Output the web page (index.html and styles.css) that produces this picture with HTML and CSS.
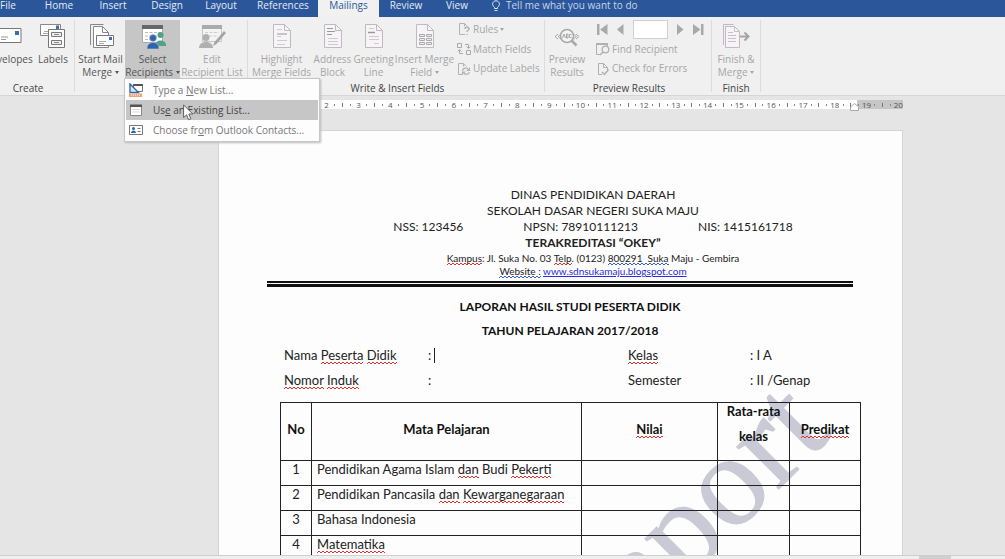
FILE: index.html
```html
<!DOCTYPE html>
<html lang="id">
<head>
<meta charset="utf-8">
<title>Laporan Hasil Studi</title>
<link rel="stylesheet" href="styles.css">
</head>
<body>
<nav class="tabs">
  <button class="tab tab-file">File</button>
  <button class="tab">Home</button>
  <button class="tab">Insert</button>
  <button class="tab">Design</button>
  <button class="tab">Layout</button>
  <button class="tab tab-wide">References</button>
  <button class="tab tab-active">Mailings</button>
  <button class="tab">Review</button>
  <button class="tab tab-view">View</button>
  <button class="tell">
    <svg width="10" height="12" viewBox="0 0 10 12" fill="none" stroke="#dbe6f6"><path d="M3.5 8.5V7.3C.2 5 1.500.8 5 .8S9.800 5 6.500 7.300V8.500ZM3.500 10.500h3"/></svg>
    Tell me what you want to do
  </button>
</nav>

<header class="ribbon">
  <section class="group group-create">
    <div class="tools">
      <button class="big big-env">
        <svg width="26" height="26" viewBox="0 0 26 26"><path d="M1 5.500h24v14H1z" fill="#fff" stroke="#777"/><path d="M19 8h4v4h-4z" fill="#3a6fb5"/><path d="M5 14h7M5 16.500h5" stroke="#999"/></svg>
        <span>Envelopes</span>
      </button>
      <button class="big big-labels">
        <svg width="26" height="26" viewBox="0 0 26 26"><path d="M.5 1.500h20v11H.5z" fill="#fff" stroke="#888"/><path d="M16 2.500h3v4h-3z" fill="#3a6fb5"/><path d="M4 8.500h4M3 10.500h5" stroke="#aaa"/><path d="M8.500 6.500h16v18h-16z" fill="#fff" stroke="#777"/><path d="M11.500 9.500h10v4h-10zM11.500 17.500h10v4h-10z" fill="#eee" stroke="#777"/><path d="M14 11.500h5M14 19.500h5" stroke="#888"/></svg>
        <span>Labels</span>
      </button>
    </div>
    <h2>Create</h2>
  </section>

  <section class="group group-start" aria-label="Start Mail Merge">
    <div class="tools">
      <button class="big big-start">
        <svg width="26" height="26" viewBox="0 0 26 26"><path d="M2.500 22V1.500h13" fill="none" stroke="#888"/><path d="M5.500 3.500h9l6 6v15h-15z" fill="#fff" stroke="#888"/><path d="M14.500 3.500v6h6" fill="none" stroke="#888"/><path d="M8.500 12.500h17v10h-17z" fill="#fff" stroke="#777"/><path d="M21 14h3v3h-3z" fill="#3a6fb5"/><path d="M11 18.500h7M11 20.500h5" stroke="#aaa"/></svg>
        <span>Start Mail<br>Merge <i class="caret"></i></span>
      </button>
      <div class="dropdown">
        <button class="big big-select" aria-expanded="true">
          <svg width="26" height="26" viewBox="0 0 26 26"><path d="M2.500 3.500h20v16h-20z" fill="#fff" stroke="#aaa"/><path d="M2 2h21v4H2z" fill="#666"/><path d="M5 9.500h15M5 13h15M5 16.500h6" stroke="#bbb" stroke-dasharray="3 1.500"/><g fill="#4fa287"><circle cx="20.500" cy="12" r="3"/><path d="M15 22c0-6 11-6 11 0v1H15z"/></g><g fill="#2f65b0" stroke="#c5c5c5" stroke-width=".6"><circle cx="13" cy="15" r="3.500"/><path d="M7 25c0-7.500 12-7.500 12 0v1H7z"/></g></svg>
          <span>Select<br>Recipients <i class="caret"></i></span>
        </button>
        <ul class="menu">
          <li><button>
            <svg width="14" height="14" viewBox="0 0 14 14"><path d="M4.500 1.500h9v7h-9z" fill="#fff" stroke="#777"/><path d="M4 1h10v2H4z" fill="#555"/><path d="M1 1v8.500h8.500z" fill="#dce9f7" stroke="#2f65b0" stroke-width="1.400"/><path d="M0 10.500h13V14H0z" fill="#e8a67c"/><path d="M2 12h9" stroke="#fff" stroke-dasharray="1 1"/></svg>
            <span>Type a <u>N</u>ew List...</span></button></li>
          <li class="hot"><button>
            <svg width="14" height="14" viewBox="0 0 14 14"><path d="M1.500 2.500h11v10h-11z" fill="#fff" stroke="#888"/><path d="M1 1.500h12v2.500H1z" fill="#555"/><path d="M3 6.500h8M3 9h8" stroke="#ddd"/></svg>
            <span>Us<u>e</u> an Existing List...</span></button></li>
          <li><button>
            <svg width="14" height="14" viewBox="0 0 14 14"><path d="M.5 2.500h13v9H.5z" fill="#fff" stroke="#777"/><circle cx="4.500" cy="5.500" r="1.500" fill="#2f65b0"/><path d="M2 10c0-3.500 5-3.500 5 0z" fill="#2f65b0"/><path d="M8.500 5.500h3M8.500 8.500h3" stroke="#777"/></svg>
            <span>Choose fr<u>o</u>m Outlook Contacts...</span></button></li>
        </ul>
        <svg class="cursor" width="11" height="17" viewBox="0 0 11 17"><path d="M.6 1v12.500l3-2.700 2 4.900 2.200-.9-2-4.800h4z" fill="#fff" stroke="#555" stroke-width=".9"/></svg>
      </div>
      <button class="big big-edit" disabled>
        <svg width="27" height="26" viewBox="0 0 27 26"><path d="M3.500 3.500h19v15h-19z" fill="#f4f4f4" stroke="#c6c6c6"/><path d="M3 2h20v4H3z" fill="#aaa"/><path d="M6 9.500h14M10 13h9" stroke="#ccc" stroke-dasharray="3 1.500"/><circle cx="7" cy="14.500" r="3.500" fill="#b0b0b0"/><path d="M0 25c0-8 14-8 14 0z" fill="#b0b0b0"/><path d="m14 23 1.500-4L25 8l2 2-9.500 11z" fill="#a5a5a5"/></svg>
        <span>Edit<br>Recipient List</span>
      </button>
    </div>
  </section>

  <section class="group group-write">
    <div class="tools">
      <button class="big big-60" disabled>
        <svg width="26" height="26" viewBox="0 0 26 26"><path d="M4.500 1.500h11l6 6v17h-17z" fill="#f6f4f6" stroke="#c2b8c2"/><path d="M15.500 1.500v6h6" fill="none" stroke="#c2b8c2"/><path d="M8 6.500h5M8 13.500h4M8 17.500h10M8 21.500h8" stroke="#ccc"/><path d="M8 10h10v2H8z" fill="#c9c4c9"/></svg>
        <span>Highlight<br>Merge Fields</span>
      </button>
      <button class="big big-40" disabled>
        <svg width="26" height="26" viewBox="0 0 26 26"><path d="M4.500 1.500h11l6 6v17h-17z" fill="#f6f4f6" stroke="#c2b8c2"/><path d="M15.500 1.500v6h6" fill="none" stroke="#c2b8c2"/><path d="M7 5.500h6M7 8.500h8M7 11.500h5" stroke="#999"/><path d="M8 15.500h10M8 18.500h10M8 21.500h10" stroke="#ccc"/></svg>
        <span>Address<br>Block</span>
      </button>
      <button class="big big-40" disabled>
        <svg width="26" height="26" viewBox="0 0 26 26"><path d="M4.500 1.500h11l6 6v17h-17z" fill="#f6f4f6" stroke="#c2b8c2"/><path d="M15.500 1.500v6h6" fill="none" stroke="#c2b8c2"/><path d="M7 9.500h7" stroke="#999" stroke-width="1.500"/><path d="M8 5.500h5M8 13.500h10M8 16.500h10M13 20.500h5" stroke="#ccc"/></svg>
        <span>Greeting<br>Line</span>
      </button>
      <button class="big big-60" disabled>
        <svg width="26" height="26" viewBox="0 0 26 26"><path d="M4.500 1.500h11l6 6v17h-17z" fill="#f6f4f6" stroke="#c2b8c2"/><path d="M15.500 1.500v6h6" fill="none" stroke="#c2b8c2"/><path d="M7.500 11.500h5v2h-5zM14.500 11.500h5v2h-5zM7.500 15.500h5v2h-5zM14.500 15.500h5v2h-5zM7.500 19.500h5v2h-5zM14.500 19.500h5v2h-5z" fill="#eee" stroke="#aaa"/></svg>
        <span>Insert Merge<br>Field <i class="caret"></i></span>
      </button>
      <div class="stack">
        <button class="small" disabled><svg width="14" height="14" viewBox="0 0 14 14" fill="none" stroke="#b3b3b3"><path d="M8 12.500H2.500v-11h5l3 3M7.500 1.500v3"/><path d="M8 7c0-2.500 4-2.500 4 0 0 1.500-2 1.500-2 3M10 12v1" stroke-width="1.500"/></svg>Rules <i class="caret"></i></button>
        <button class="small" disabled><svg width="14" height="14" viewBox="0 0 14 14" fill="none" stroke="#aaa"><path d="M.5 1.500h4v4h-4zM9.500 8.500h4v4h-4zM8 2.500h3.500V6M9.500 4.500l2 2 2-2M6 11.500H2.500V8M.5 9.500l2-2 2 2"/></svg>Match Fields</button>
        <button class="small" disabled><svg width="14" height="14" viewBox="0 0 14 14" fill="none" stroke="#b3b3b3"><path d="M5 12.500H1.500v-11h5l3 3M6.500 1.500v3"/><path d="M5.500 9c.5-3.500 5-4 6-1M12.500 5.500V8.500H9.500M12.500 10c-1 3-5 3-6 .500M5.500 13v-3h3" stroke-width="1.200"/></svg>Update Labels</button>
      </div>
    </div>
    <h2>Write &amp; Insert Fields</h2>
  </section>

  <section class="group group-preview">
    <div class="tools">
      <button class="big big-prev" disabled>
        <svg width="26" height="26" viewBox="0 0 26 26" fill="none" stroke="#a8a8a8"><path d="m4 11-3 2.500L4 16M7 11l-3 2.500L7 16M22 11l3 2.500L22 16M19.500 11l3 2.500-3 2.500"/><circle cx="13" cy="13" r="6.500" fill="#f4f4f4" stroke-width="1.500"/><path d="m17.500 17.500 5 5" stroke-width="2.500"/><path d="m8.500 15 1.500-4 1.500 4M12.500 11v4h1.500v-4zM17.500 11.500h-2v3h2" stroke-width="1"/></svg>
        <span>Preview<br>Results</span>
      </button>
      <div class="stack">
        <div class="record">
          <button disabled aria-label="First"><svg width="11" height="11" viewBox="0 0 11 11" fill="#a9a9a9"><path d="M0 0h2.500v11H0zM10.500 0v11L3 5.500z"/></svg></button>
          <button disabled aria-label="Previous"><svg width="7" height="11" viewBox="0 0 7 11" fill="#a9a9a9"><path d="M6.500 0v11L0 5.500z"/></svg></button>
          <input type="text" aria-label="Record">
          <button disabled aria-label="Next"><svg width="7" height="11" viewBox="0 0 7 11" fill="#a9a9a9"><path d="M0 0v11l6.500-5.500z"/></svg></button>
          <button disabled aria-label="Last"><svg width="11" height="11" viewBox="0 0 11 11" fill="#a9a9a9"><path d="M0 0v11l7.500-5.500zM8 0h2.500v11H8z"/></svg></button>
        </div>
        <button class="small" disabled><svg width="14" height="14" viewBox="0 0 14 14" fill="none" stroke="#b0b0b0"><path d="M4 12.500H.5v-11h11V4"/><path d="M0 2h12" stroke-width="2"/><circle cx="9.500" cy="7.500" r="3.300" stroke-width="1.300"/><path d="m7 10-3 3" stroke-width="1.500"/></svg>Find Recipient</button>
        <button class="small" disabled><svg width="14" height="14" viewBox="0 0 14 14" fill="none" stroke="#b0b0b0"><path d="M6 12.500H2.500v-11h5l4 4V8M7.500 1.500v4h4"/><path d="m6 10 2.500 2.500 4-5" stroke-width="1.500"/></svg>Check for Errors</button>
      </div>
    </div>
    <h2>Preview Results</h2>
  </section>

  <section class="group group-finish">
    <div class="tools">
      <button class="big big-fin" disabled>
        <svg width="28" height="26" viewBox="0 0 28 26"><path d="M1.500 22V1.500h10" fill="none" stroke="#c2b8c2"/><path d="M3.500 3.500h9l5 5v16h-14z" fill="#f6f4f6" stroke="#c2b8c2"/><path d="M12.500 3.500v5h5M6 9.500h5M6 12.500h8M6 15.500h8M6 18.500h8" fill="none" stroke="#c8bfc8"/><path d="M18 13.500h8M22.500 9.500l4 4-4 4" fill="none" stroke="#a5a5a5" stroke-width="2"/></svg>
        <span>Finish &amp;<br>Merge <i class="caret"></i></span>
      </button>
    </div>
    <h2>Finish</h2>
  </section>
</header>

<main class="workspace">
  <div class="ruler">
    <div class="ruler-margin"></div>
    <ol class="ruler-scale">
      <li><i></i><b></b><i></i><span></span></li><li><i></i><b></b><i></i><span>2</span></li><li><i></i><b></b><i></i><span>3</span></li><li><i></i><b></b><i></i><span>4</span></li><li><i></i><b></b><i></i><span>5</span></li><li><i></i><b></b><i></i><span>6</span></li><li><i></i><b></b><i></i><span>7</span></li><li><i></i><b></b><i></i><span>8</span></li><li><i></i><b></b><i></i><span>9</span></li><li><i></i><b></b><i></i><span>10</span></li><li><i></i><b></b><i></i><span>11</span></li><li><i></i><b></b><i></i><span>12</span></li><li><i></i><b></b><i></i><span>13</span></li><li><i></i><b></b><i></i><span>14</span></li><li><i></i><b></b><i></i><span>15</span></li><li><i></i><b></b><i></i><span>16</span></li><li><i></i><b></b><i></i><span>17</span></li><li><i></i><b></b><i></i><span>18</span></li><li class="past"><i></i><b></b><i></i><span>19</span></li><li class="out"><i></i><b></b><i></i><span>20</span></li>
    </ol>
    <svg class="indent" width="9" height="8" viewBox="0 0 9 8"><path d="M.5 7.500V4l4-3.500 4 3.500v3.500z" fill="#fff" stroke="#aaa"/></svg>
  </div>

  <article class="page">
    <svg class="watermark" width="686" height="424" aria-hidden="true"><text transform="translate(364 554) rotate(-45)">Raport</text></svg>
    <div class="sheet">
      <div class="letterhead">
        <p>DINAS PENDIDIKAN DAERAH</p>
        <p>SEKOLAH DASAR NEGERI SUKA MAJU</p>
        <p class="codes"><span>NSS: 123456</span><span>NPSN: 78910111213</span><span>NIS: 1415161718</span></p>
        <p><strong>TERAKREDITASI “OKEY”</strong></p>
        <p class="address"><span class="sp">Kampus</span>: Jl. Suka No. 03 <span class="sp">Telp</span>. (0123) <span class="gr">800291&nbsp; Suka</span> Maju - Gembira</p>
        <p class="website"><span class="gr">Website :</span> <a href="#">www.sdnsukamaju.blogspot.com</a></p>
      </div>
      <hr class="rule">
      <h1>LAPORAN HASIL STUDI PESERTA DIDIK</h1>
      <h1>TAHUN PELAJARAN 2017/2018</h1>
      <div class="student">
        <span>Nama <span class="sp">Peserta</span> <span class="sp">Didik</span></span><span>:<i class="text-caret"></i></span><span><span class="sp">Kelas</span></span><span>: I A</span>
        <span><span class="sp">Nomor</span> <span class="sp">Induk</span></span><span>:</span><span>Semester</span><span>: II /Genap</span>
      </div>
      <table class="marks">
        <colgroup><col class="c-no"><col class="c-subject"><col class="c-mark"><col class="c-avg"><col class="c-grade"></colgroup>
        <thead><tr><th>No</th><th>Mata Pelajaran</th><th><span class="sp">Nilai</span></th><th class="avg"><div>Rata-rata</div><div>kelas</div></th><th><span class="sp">Predikat</span></th></tr></thead>
        <tbody>
          <tr><td>1</td><td>Pendidikan Agama Islam <span class="sp">dan</span> Budi <span class="sp">Pekerti</span></td><td></td><td></td><td></td></tr>
          <tr><td>2</td><td>Pendidikan Pancasila <span class="sp">dan</span> <span class="sp">Kewarganegaraan</span></td><td></td><td></td><td></td></tr>
          <tr><td>3</td><td>Bahasa Indonesia</td><td></td><td></td><td></td></tr>
          <tr><td>4</td><td><span class="sp">Matematika</span></td><td></td><td></td><td></td></tr>
        </tbody>
      </table>
    </div>
  </article>
</main>
<footer class="status"><span></span></footer>
</body>
</html>
```
FILE: styles.css
```css
* { box-sizing: border-box; }
body {
  margin: 0;
  height: 100vh;
  display: flex;
  flex-direction: column;
  overflow: hidden;
  background: #e5e5e5;
  font: 10px/13px "Open Sans", "Noto Sans", sans-serif;
  color: #555;
}
button {
  border: 0;
  padding: 0;
  background: none;
  font: inherit;
  color: inherit;
  white-space: nowrap;
}
h1, h2, p, ul, ol { margin: 0; padding: 0; list-style: none; }

.tabs {
  display: flex;
  flex: none;
  height: 17px;
  background: #2b579a;
  color: #e3ebf7;
}
.tab { width: 54px; padding-bottom: 7px; line-height: 10px; }
.tab-file { width: 32px; padding-right: 16px; }
.tab-wide { width: 70px; }
.tab-active { width: 61px; background: #f1f1f1; color: #2b579a; }
.tab-view { width: 48px; }
.tell {
  display: flex;
  align-items: flex-start;
  gap: 5px;
  margin-left: 10px;
  line-height: 10px;
  color: #c6d5ec;
}

.ribbon {
  display: flex;
  flex: none;
  height: 79px;
  background: #f0f0f0;
  border-bottom: 1px solid #d6d6d6;
}
.group {
  position: relative;
  flex: none;
  display: flex;
  flex-direction: column;
  margin: 3px 0;
  border-right: 1px solid #dcdcdc;
}
.group h2 { text-align: center; font: 10px/13px "Open Sans", sans-serif; color: #444; }
.group-create { width: 75px; }
.group-create h2 { padding-right: 18px; }
.group-start { width: 173px; padding-left: 1px; }
.group-write { width: 297px; padding-left: 3px; }
.group-preview { width: 167px; padding-left: 2px; }
.group-finish { width: 49px; }
.tools { display: flex; height: 58px; margin-bottom: 4px; }
.big { display: flex; flex-direction: column; align-items: center; gap: 4px; height: 58px; padding-top: 3px; }
.big svg { flex: none; }
.big-env { width: 54px; margin-left: -18px; }
.big-labels { width: 34px; }
.big-start { width: 49px; }
.big-select { width: 55px; background: #c6c6c6; }
.big-edit { width: 64px; }
.big-60 { width: 61px; }
.big-40 { width: 41px; }
.big-prev { width: 40px; }
.big-fin { width: 48px; }
button:disabled { color: #a6a6a6; }
.caret {
  display: inline-block;
  vertical-align: 2px;
  border: 2px solid transparent;
  border-top: 3px solid currentColor;
  border-bottom: 0;
}
.stack { display: flex; flex-direction: column; gap: 1px; margin-left: 2px; }
.group-preview .stack { margin-left: 9px; }
.small { display: flex; align-items: center; gap: 2px; height: 19px; }
.record { display: flex; align-items: center; gap: 9px; height: 19px; padding-left: 1px; }
.record button { display: flex; }
.record input { width: 35px; height: 19px; border: 1px solid #cfcfcf; background: #fff; padding: 0 2px; font: inherit; }

.dropdown { position: relative; }
.menu {
  position: absolute;
  z-index: 5;
  left: -1px;
  top: 58px;
  width: 196px;
  padding: 1px;
  background: #fdfdfd;
  border: 1px solid #c6c6c6;
  box-shadow: 1px 1px 2px #bbb;
}
.menu button { display: flex; align-items: center; gap: 10px; width: 100%; height: 20px; padding-left: 3px; color: #777; }
.menu .hot { background: #c6c6c6; }
.menu .hot button { color: #444; }
.cursor { position: absolute; z-index: 6; left: 58px; top: 84px; }

.workspace { flex: 1; min-height: 0; overflow: hidden; padding: 4px 102px 0 218px; }
.ruler { position: relative; display: flex; height: 9px; margin-bottom: 21px; }
.ruler-margin { width: 49px; background: #c6c6c6; }
.ruler-scale { display: flex; flex: 1; background: #fff; font-size: 8px; line-height: 9px; }
.ruler-scale li { flex: 1; display: grid; grid-template-columns: repeat(4, 1fr); place-items: center; }
.ruler-scale i { width: 1px; height: 2px; background: #888; }
.ruler-scale b { width: 1px; height: 4px; background: #777; }
.ruler-scale .past { background: linear-gradient(90deg, #fff 55%, #c6c6c6 55%); }
.ruler-scale .out { background: #c6c6c6; }
.indent { position: absolute; right: 44px; top: 3px; }

.page {
  position: relative;
  height: 900px;
  overflow: hidden;
  background: #fdfdfd;
  border: 1px solid #d4d4d4;
  font: 13px/16px Lato, sans-serif;
  color: #222;
}
.watermark { position: absolute; left: 0; top: 0; }
.watermark text { font: 130px "Liberation Serif", serif; fill: #c9cad6; stroke: #c9cad6; stroke-width: 1px; }
.sheet { position: relative; padding: 56px 49px 0 48px; }
.letterhead { padding-left: 66px; text-align: center; font-size: 12px; }
.codes { display: flex; justify-content: center; gap: 60px; }
.letterhead .address { font-size: 10px; line-height: 15px; }
.letterhead .website { font-size: 10px; line-height: 11px; }
.website a { color: #2a2ae0; }
.sp, .gr { padding-bottom: 1px; background: 0 100% / 4px 2px repeat-x; }
.sp { background-image: url("data:image/svg+xml,%3Csvg xmlns='http://www.w3.org/2000/svg' width='4' height='2' viewBox='0 0 4 2'%3E%3Cpath d='M0 2l2-2 2 2' fill='none' stroke='%23e03030'/%3E%3C/svg%3E"); }
.gr { background-image: url("data:image/svg+xml,%3Csvg xmlns='http://www.w3.org/2000/svg' width='4' height='2' viewBox='0 0 4 2'%3E%3Cpath d='M0 2l2-2 2 2' fill='none' stroke='%233060d8'/%3E%3C/svg%3E"); }
.rule { height: 6px; margin: 4px 0 8px; border: solid #111; border-width: 2px 0 3px; }
.page h1 { padding-left: 20px; text-align: center; font: bold 12px/24px Lato, sans-serif; color: #111; }
.student {
  display: grid;
  grid-template-columns: 144px 200px 122px 1fr;
  padding-left: 17px;
  line-height: 25px;
}
.text-caret { display: inline-block; width: 1px; height: 15px; margin-left: 3px; vertical-align: -3px; background: #222; }
.marks { width: calc(100% - 5px); margin: 9px 0 0 13px; border-collapse: collapse; table-layout: fixed; }
.c-no { width: 31px; }
.c-mark { width: 136px; }
.c-avg { width: 72px; }
.c-grade { width: 71px; }
.marks th, .marks td { border: 1px solid #222; padding: 0 5px; }
.marks th { height: 58px; padding-bottom: 6px; color: #111; }
.marks .avg { padding: 0 2px; vertical-align: top; }
.avg div + div { margin-top: 9px; }
.marks td { height: 25px; padding-bottom: 8px; }
.marks td:first-child { text-align: center; }

.status { flex: none; height: 4px; background: #efefef; border-top: 1px solid #cfcfcf; padding-left: 919px; }
.status span { display: block; width: 32px; height: 3px; background: #d0d0d0; }
```
